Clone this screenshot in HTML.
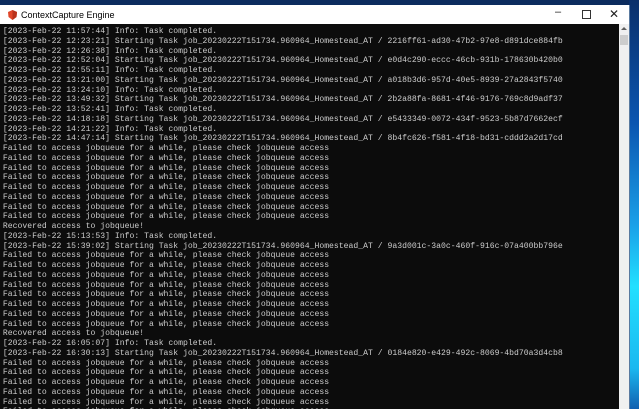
<!DOCTYPE html>
<html><head><meta charset="utf-8"><style>
html,body{margin:0;padding:0;width:639px;height:409px;overflow:hidden;background:#0a2a5a}
.desk{position:absolute;left:629px;top:0;width:10px;height:409px;background:linear-gradient(#0a2f6a 0%,#0b55b0 30%,#1aa0e8 55%,#22e0ff 70%,#1ab8f0 90%,#1060b0 100%)}
.top{position:absolute;left:0;top:0;width:639px;height:5px;background:#0c2c5e}
.win{position:absolute;left:0;top:5px;width:629px;height:404px;background:#fff;border-right:1px solid #5a7aa0}
.title{position:absolute;left:0;top:0;width:629px;height:19px;background:#fff;font:9px "Liberation Sans",sans-serif;color:#000}
.title .t{position:absolute;left:21px;top:5px}
.ico{position:absolute;left:8px;top:5px;width:9px;height:10px}
.ctl{position:absolute;top:3px;font:11px "Liberation Sans",sans-serif;color:#222}
.con{position:absolute;left:0;top:19px;width:619px;height:385px;background:#0c0c0c;overflow:hidden}
pre{margin:0;padding:0 0 0 3px;font:8.33px/9.75px "Liberation Mono",monospace;color:#cccccc;position:relative;top:3px;transform:scaleX(0.974);transform-origin:0 0}
.sb{position:absolute;left:619px;top:19px;width:10px;height:385px;background:#f0f0f0}
.thumb{position:absolute;left:1px;top:11px;width:8px;height:10px;background:#cdcdcd}
.arr{position:absolute;left:2px;top:3px;width:0;height:0;border-left:3px solid transparent;border-right:3px solid transparent;border-bottom:3px solid #606060}
</style></head><body>
<div class="top"></div>
<div class="desk"></div>
<div class="win">
 <div class="title">
  <svg class="ico" viewBox="0 0 9 10"><path d="M4.5 0 L9 2 L8.5 7 L4.5 10 L0.5 7 L0 2 Z" fill="#e0462a"/><path d="M4.5 0 L9 2 L8.5 7 L4.5 10 Z" fill="#b8321c"/></svg>
  <span class="t">ContextCapture Engine</span>
  <span class="ctl" style="left:555px;top:1px">&#8211;</span>
  <span style="position:absolute;left:582px;top:5px;width:7px;height:7px;border:1px solid #333"></span>
  <span class="ctl" style="left:609px;top:2px;font-size:12px">&#10005;</span>
 </div>
 <div class="con"><pre>[2023-Feb-22 11:57:44] Info: Task completed.
[2023-Feb-22 12:23:21] Starting Task job_20230222T151734.960964_Homestead_AT / 2216ff61-ad30-47b2-97e8-d891dce884fb
[2023-Feb-22 12:26:38] Info: Task completed.
[2023-Feb-22 12:52:04] Starting Task job_20230222T151734.960964_Homestead_AT / e0d4c290-eccc-46cb-931b-178630b420b0
[2023-Feb-22 12:55:11] Info: Task completed.
[2023-Feb-22 13:21:00] Starting Task job_20230222T151734.960964_Homestead_AT / a018b3d6-957d-40e5-8939-27a2843f5740
[2023-Feb-22 13:24:10] Info: Task completed.
[2023-Feb-22 13:49:32] Starting Task job_20230222T151734.960964_Homestead_AT / 2b2a88fa-8681-4f46-9176-769c8d9adf37
[2023-Feb-22 13:52:41] Info: Task completed.
[2023-Feb-22 14:18:18] Starting Task job_20230222T151734.960964_Homestead_AT / e5433349-0072-434f-9523-5b87d7662ecf
[2023-Feb-22 14:21:22] Info: Task completed.
[2023-Feb-22 14:47:14] Starting Task job_20230222T151734.960964_Homestead_AT / 8b4fc626-f581-4f18-bd31-cddd2a2d17cd
Failed to access jobqueue for a while, please check jobqueue access
Failed to access jobqueue for a while, please check jobqueue access
Failed to access jobqueue for a while, please check jobqueue access
Failed to access jobqueue for a while, please check jobqueue access
Failed to access jobqueue for a while, please check jobqueue access
Failed to access jobqueue for a while, please check jobqueue access
Failed to access jobqueue for a while, please check jobqueue access
Failed to access jobqueue for a while, please check jobqueue access
Recovered access to jobqueue!
[2023-Feb-22 15:13:53] Info: Task completed.
[2023-Feb-22 15:39:02] Starting Task job_20230222T151734.960964_Homestead_AT / 9a3d001c-3a0c-460f-916c-07a400bb796e
Failed to access jobqueue for a while, please check jobqueue access
Failed to access jobqueue for a while, please check jobqueue access
Failed to access jobqueue for a while, please check jobqueue access
Failed to access jobqueue for a while, please check jobqueue access
Failed to access jobqueue for a while, please check jobqueue access
Failed to access jobqueue for a while, please check jobqueue access
Failed to access jobqueue for a while, please check jobqueue access
Failed to access jobqueue for a while, please check jobqueue access
Recovered access to jobqueue!
[2023-Feb-22 16:05:07] Info: Task completed.
[2023-Feb-22 16:30:13] Starting Task job_20230222T151734.960964_Homestead_AT / 0184e820-e429-492c-8069-4bd70a3d4cb8
Failed to access jobqueue for a while, please check jobqueue access
Failed to access jobqueue for a while, please check jobqueue access
Failed to access jobqueue for a while, please check jobqueue access
Failed to access jobqueue for a while, please check jobqueue access
Failed to access jobqueue for a while, please check jobqueue access
Failed to access jobqueue for a while, please check jobqueue access</pre></div>
 <div class="sb"><div class="arr"></div><div class="thumb"></div></div>
</div>
</body></html>
